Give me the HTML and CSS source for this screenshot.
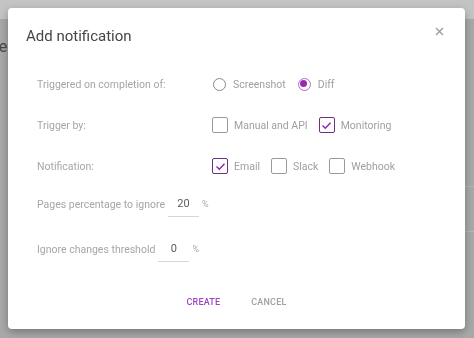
FILE: index.html
```html
<!DOCTYPE html>
<html lang="en">

<head>
    <meta charset="UTF-8">
    <meta name="viewport" content="width=device-width, initial-scale=1.0">
    <title>Add notification</title>
    <link rel="stylesheet" href="styles.css">
</head>

<body>
    <div class="page">
        <div class="page-top"></div>
        <h1 class="page-title">Pages</h1>
        <div class="page-line line-1"></div>
        <div class="page-line line-2"></div>
    </div>

    <div class="backdrop">
        <div class="dialog">
            <div class="dialog-header">
                <h2>Add notification</h2>
                <button class="close" type="button" aria-label="Close">
                    <svg width="9" height="9" viewBox="0 0 9 9">
                        <path d="M1 1L8 8M8 1L1 8" stroke="#9a9a9a" stroke-width="1.3" fill="none" />
                    </svg>
                </button>
            </div>

            <form class="dialog-body">
                <div class="form-row">
                    <span class="form-label">Triggered on completion of:</span>
                    <div class="options">
                        <label class="option"><span class="radio"></span>Screenshot</label>
                        <label class="option"><span class="radio checked"></span>Diff</label>
                    </div>
                </div>

                <div class="form-row">
                    <span class="form-label">Trigger by:</span>
                    <div class="options">
                        <label class="option"><span class="checkbox"></span>Manual and API</label>
                        <label class="option"><span class="checkbox checked">
                                <svg width="13" height="13" viewBox="0 0 13 13">
                                    <path d="M2.5 6.5L5.3 9.2L10.5 3.8" stroke="#8e24aa" stroke-width="1.4" fill="none" />
                                </svg>
                            </span>Monitoring</label>
                    </div>
                </div>

                <div class="form-row">
                    <span class="form-label">Notification:</span>
                    <div class="options">
                        <label class="option"><span class="checkbox checked">
                                <svg width="13" height="13" viewBox="0 0 13 13">
                                    <path d="M2.5 6.5L5.3 9.2L10.5 3.8" stroke="#8e24aa" stroke-width="1.4" fill="none" />
                                </svg>
                            </span>Email</label>
                        <label class="option"><span class="checkbox"></span>Slack</label>
                        <label class="option"><span class="checkbox"></span>Webhook</label>
                    </div>
                </div>

                <div class="field-row first">
                    <span class="field-label">Pages percentage to ignore</span>
                    <input class="field-input" type="text" value="20">
                    <span class="unit">%</span>
                </div>

                <div class="field-row">
                    <span class="field-label">Ignore changes threshold</span>
                    <input class="field-input" type="text" value="0">
                    <span class="unit">%</span>
                </div>
            </form>

            <div class="dialog-actions">
                <button class="btn btn-primary" type="button">CREATE</button>
                <button class="btn" type="button">CANCEL</button>
            </div>
        </div>
    </div>
</body>

</html>
```

FILE: styles.css
```css
body {
    margin: 0;
    padding: 0;
    width: 474px;
    height: 338px;
    overflow: hidden;
    font-family: Roboto, "Liberation Sans", sans-serif;
    background-color: #a9a9a9;
}

.page-top {
    height: 19px;
    background-color: #c4c4c4;
}

.page-title {
    margin: 18px 0 0 -29px;
    font-size: 16px;
    font-weight: 400;
    color: #4a4a4a;
}

.page-line {
    height: 1px;
    margin-left: 420px;
    background-color: #b8b8b8;
}

.line-1 {
    margin-top: 130px;
}

.line-2 {
    margin-top: 44px;
}

.backdrop {
    position: fixed;
    top: 0;
    left: 0;
    right: 0;
    bottom: 0;
    padding: 8px;
}

.dialog {
    width: 457px;
    height: 321px;
    box-sizing: border-box;
    background: #fff;
    border-radius: 4px;
    box-shadow: 0 3px 8px rgba(0, 0, 0, 0.3);
}

.dialog-header {
    display: flex;
    justify-content: space-between;
    align-items: flex-start;
    padding: 18px 21px 0 18px;
}

.dialog-header h2 {
    margin: 0;
    font-size: 15px;
    line-height: 20px;
    font-weight: 400;
    color: #454545;
}

.close {
    border: none;
    background: none;
    padding: 0;
    margin-top: 1px;
    width: 9px;
    height: 9px;
    display: flex;
    cursor: pointer;
}

.dialog-body {
    padding: 26px 0 0 29px;
    margin: 0;
}

.form-row {
    display: flex;
    align-items: center;
    height: 24px;
}

.form-row + .form-row {
    margin-top: 17px;
}

.form-label {
    width: 175px;
    flex: none;
    font-size: 10.5px;
    color: #a6a6a6;
}

.options {
    display: flex;
    align-items: center;
}

.option {
    display: flex;
    align-items: center;
    margin-right: 11px;
    font-size: 10.5px;
    color: #a0a0a0;
}

.radio {
    position: relative;
    width: 13px;
    height: 13px;
    box-sizing: border-box;
    border: 1.5px solid #8a8a8a;
    border-radius: 50%;
    margin: 0 7px 0 1px;
}

.radio.checked {
    border-color: #b36ccb;
}

.radio.checked::after {
    content: "";
    position: absolute;
    top: 1.5px;
    left: 1.5px;
    width: 7px;
    height: 7px;
    border-radius: 50%;
    background: #9c27b0;
}

.checkbox {
    display: flex;
    align-items: center;
    justify-content: center;
    width: 16px;
    height: 16px;
    box-sizing: border-box;
    border: 1.5px solid #9a9a9a;
    border-radius: 2px;
    margin-right: 6px;
}

.checkbox.checked {
    border-color: #6d2f7e;
}

.field-row {
    display: flex;
    align-items: center;
    height: 30px;
    margin-top: 15px;
}

.field-row.first {
    margin-top: 11px;
}

.field-label {
    font-size: 10.5px;
    color: #a6a6a6;
    margin-right: 3px;
}

.field-input {
    width: 31px;
    height: 26px;
    box-sizing: border-box;
    padding: 0;
    border: none;
    border-bottom: 1px solid #d6d6d6;
    background: transparent;
    font-family: inherit;
    font-size: 11px;
    color: #5a5a5a;
    text-align: center;
    outline: none;
}

.unit {
    margin-left: 3px;
    font-size: 9px;
    color: #ababab;
}

.dialog-actions {
    display: flex;
    justify-content: center;
    gap: 15px;
    margin-top: 24px;
}

.btn {
    height: 28px;
    padding: 0 8px;
    border: none;
    background: none;
    font-family: inherit;
    font-size: 9px;
    font-weight: 500;
    letter-spacing: 0.2px;
    color: #a0a0a0;
    cursor: pointer;
}

.btn-primary {
    color: #a142c2;
}
```
